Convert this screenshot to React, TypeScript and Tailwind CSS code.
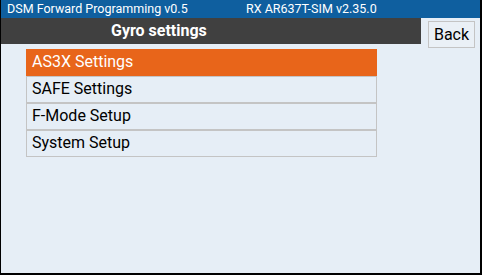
const MENU = ["AS3X Settings", "SAFE Settings", "F-Mode Setup", "System Setup"];

export default function App() {
  return (
    <div className="w-[482px] h-[275px] bg-black pl-px pr-[2px] pb-[2px] font-['Roboto',sans-serif]">
      <div className="h-full bg-[#e6eef6] flex flex-col">
        {/* Title bar */}
        <div className="h-[18px] bg-[#0f5f9f] text-white text-[12.5px] leading-[18px] flex">
          <span className="pl-[6px] w-[245px]">DSM Forward Programming v0.5</span>
          <span>RX AR637T-SIM v2.35.0</span>
        </div>

        {/* Header row */}
        <div className="flex items-start h-[30px]">
          <div className="w-[420px] h-[26px] bg-[#404040] text-white font-bold text-[16px] leading-[26px] pl-[110px]">
            Gyro settings
          </div>
          <button className="ml-[7px] mt-[3px] w-[47px] h-[27px] border border-[#c4c4c4] bg-[#eaf0f6] text-black text-[16px] leading-[25px] text-center">
            Back
          </button>
        </div>

        {/* Menu */}
        <div className="mt-px ml-[25px] w-[351px] flex flex-col">
          {MENU.map((m, i) =>
            i === 0 ? (
              <div key={m} className="h-[27px] bg-[#e8651a] text-white text-[16px] leading-[26px] pl-[6px]">
                {m}
              </div>
            ) : (
              <div key={m} className="h-[27px] border border-[#c4c4c4] text-black text-[16px] leading-[24px] pl-[5px]">
                {m}
              </div>
            )
          )}
        </div>
      </div>
    </div>
  );
}
